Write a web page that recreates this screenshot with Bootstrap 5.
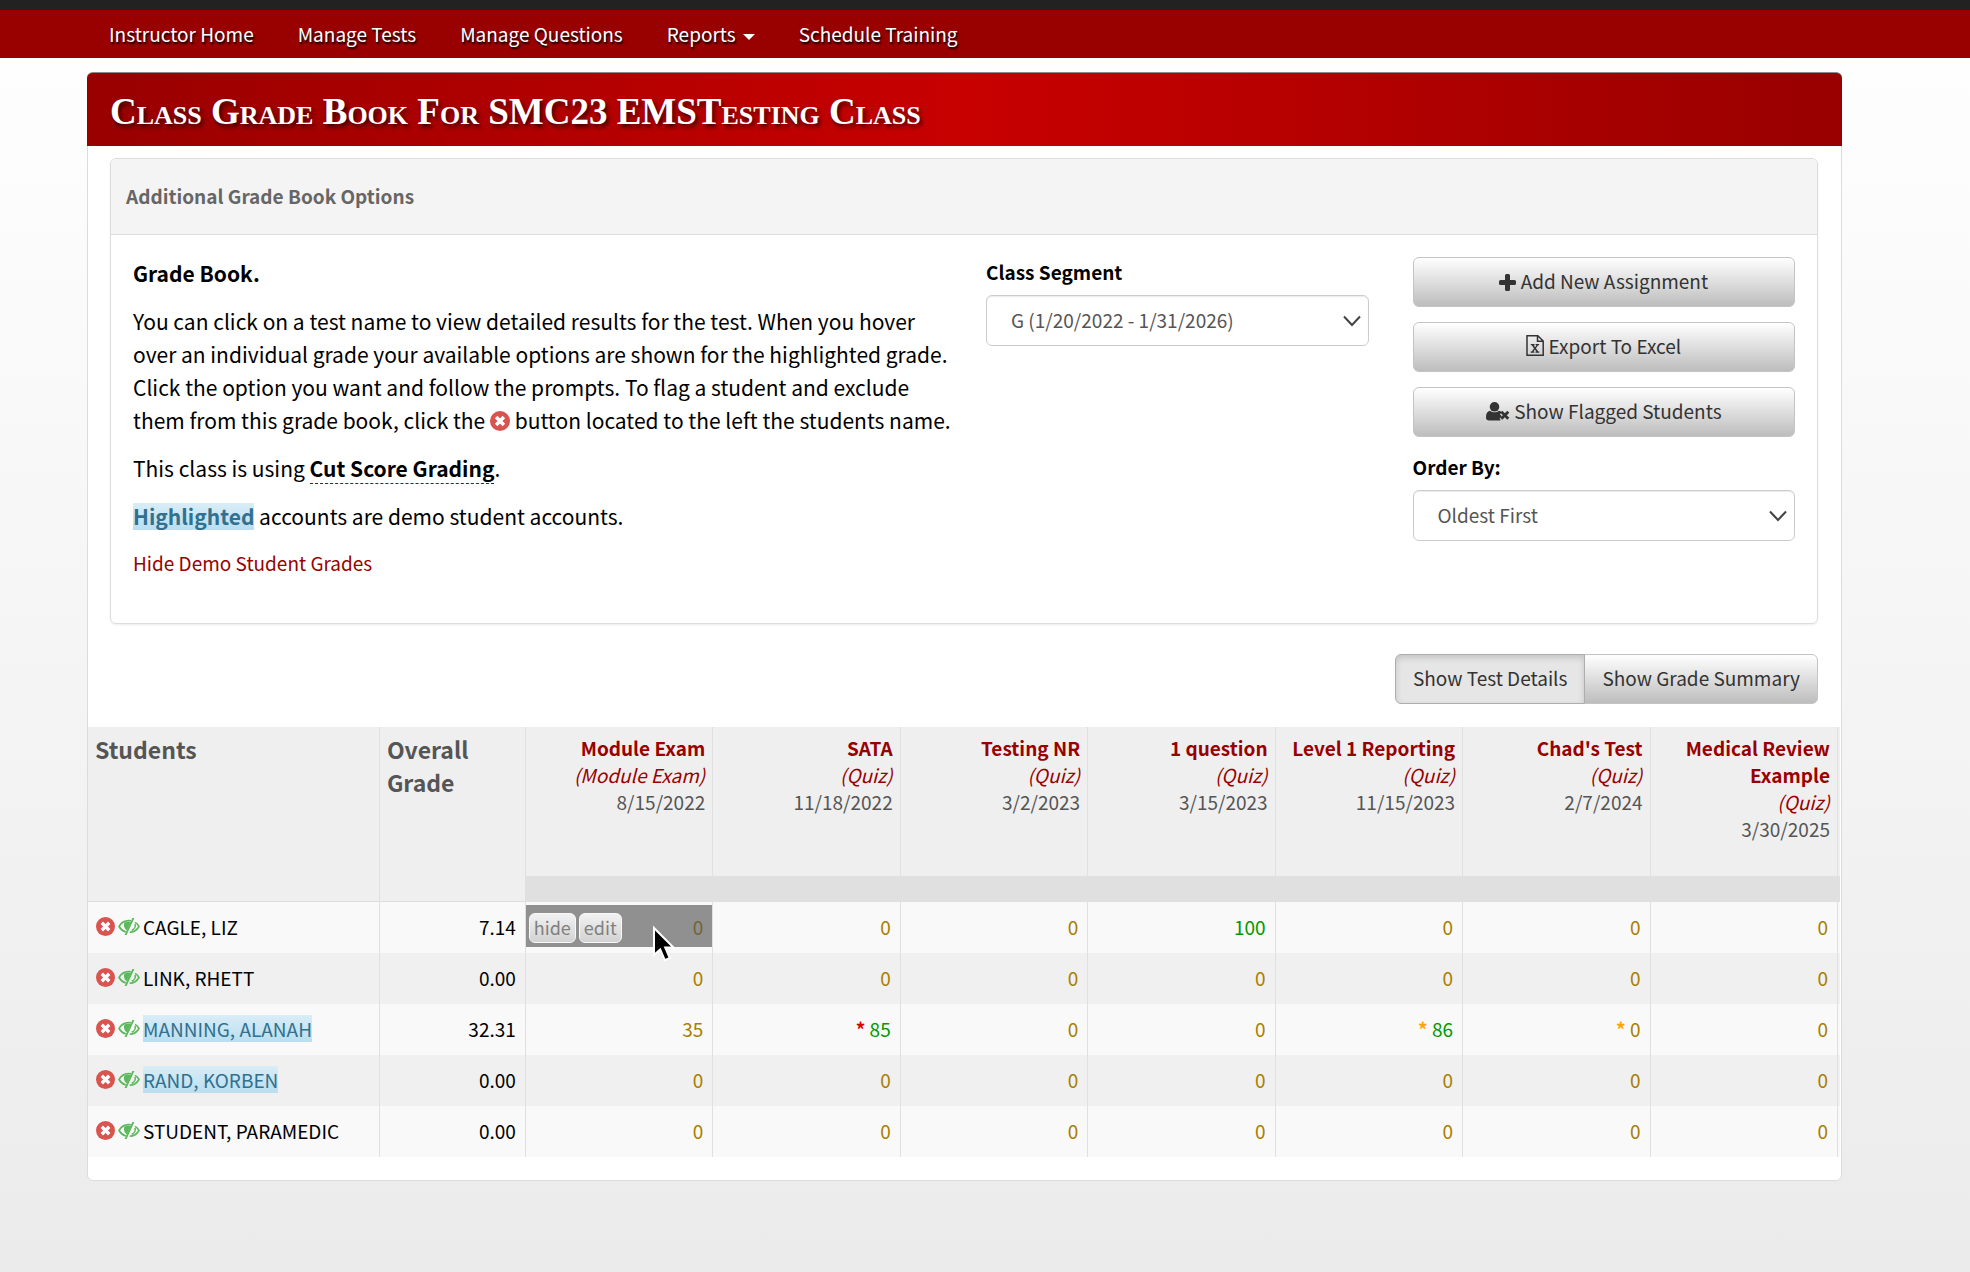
<!DOCTYPE html>
<html lang="en">
<head>
<meta charset="utf-8">
<meta name="viewport" content="width=device-width, initial-scale=1">
<title>Class Grade Book</title>
<link href="https://cdn.jsdelivr.net/npm/bootstrap@5.3.0/dist/css/bootstrap.min.css" rel="stylesheet">
<style>
:root { --gb-red: #900; --gb-line: #dcdcdc; --gb-text: #333; }
body { font: 19px/33px "Noto Sans CJK SC", "Noto Sans", sans-serif; color: #000; min-height: 100vh;
  background: linear-gradient(#fff, #ebebeb) no-repeat; border-top: 10px solid #222; }
a { color: var(--gb-red); text-decoration: none; }
.gb-nav { background: var(--gb-red); padding: 0 128px 0 87px; }
.gb-nav .nav-link { color: #fff; padding: 0 22px; line-height: 47px; padding-bottom: 1px; text-shadow: 1px 2px 2px #000; }
.gb-nav .dropdown-toggle::after { margin-left: 7px; vertical-align: 2px; border-width: 6px 6px 0; }
.gb-panel { margin: 14px 128px 40px 87px; background: #fff; border: 1px solid var(--gb-line); border-radius: 6px; padding-bottom: 23px; }
.gb-title { margin: -1px -1px 0; padding: 4px 23px 0; font: bold 37px/69px "Liberation Serif", serif; font-variant: small-caps;
  color: #fff; text-shadow: 2px 3px 4px rgba(0,0,0,.7); border-top: 1px solid #8a8a8a; border-radius: 6px 6px 0 0;
  background: linear-gradient(90deg, #900, #c80000 50%, #900); }
.gb-well { margin: 12px 23px 30px 22px; border: 1px solid #ddd; border-radius: 6px; box-shadow: 0 1px 2px rgba(0,0,0,.08); }
.gb-well-head { background: #f4f4f4; border-bottom: 1px solid #ddd; border-radius: 6px 6px 0 0; padding: 0 15px 2px;
  line-height: 73px; font-size: 19px; font-weight: bold; color: #666; margin: 0; }
.gb-well-body { padding: 22px 22px 30px; }
.gb-well-body .row { --bs-gutter-x: 44px; }
.gb-well-body p { margin-bottom: 15px; }
.gb-intro { font-size: 21px; }
.gb-intro svg { vertical-align: -2px; }
.gb-intro .gb-aside-link { font-size: 19px; line-height: 30px; }
.gb-tip { font-weight: bold; border-bottom: 1px dashed var(--gb-red); }
.gb-demo { color: #31708f; background: linear-gradient(#d9edf7, #b9def0); display: inline-block; line-height: 27px; }
.gb-label { display: block; font-weight: bold; line-height: 30px; margin-bottom: 8px; }
.form-select.gb-select { height: 51px; font-size: 19px; line-height: 30px; color: #555; padding: 0 40px 1px 24px; border: 1px solid #ccc; border-radius: 6px;
  box-shadow: inset 0 1px 1px rgba(0,0,0,.08);
  background-image: url("data:image/svg+xml,%3Csvg xmlns='http://www.w3.org/2000/svg' viewBox='0 0 18 12'%3E%3Cpath fill='none' stroke='%23444' stroke-width='2' d='M1 1.500l8 8.500 8-8.500'/%3E%3C/svg%3E");
  background-size: 18px 12px; background-position: right 7px center; }
.btn.gb-btn { height: 50px; padding: 0 17px 2px; font-size: 19px; line-height: 46px; color: var(--gb-text); border: 1px solid #c4c4c4; border-radius: 6px;
  background: linear-gradient(#fff, #bdbdbd); }
.gb-btn svg { fill: #333; vertical-align: -2px; }
.gb-actions { gap: 15px; margin-bottom: 15px; }
.btn-group .gb-btn.active { background: #e6e6e6; border-color: #adadad; box-shadow: inset 0 3px 6px rgba(0,0,0,.15); }
.btn-group .gb-btn:first-child { border-radius: 6px 0 0 6px; }
.btn-group .gb-btn:last-child { border-radius: 0 6px 6px 0; }
.gb-tools { margin: 0 23px 23px 22px; }
.gb-grid { width: calc(100% - 1px); table-layout: fixed; border-collapse: separate; border-spacing: 0; }
.gb-grid .w-name { width: 16.66%; }
.gb-grid .w-grade { width: 8.33%; }
.gb-grid .w-edge { width: 2px; }
.gb-grid th, .gb-grid td { border-right: 1px solid #e0e0e0; }
.gb-grid thead th { background: #efefef; vertical-align: top; }
.gb-grid .gb-big { font-size: 23px; line-height: 33px; color: #555; padding: 6px 7px 0; border-bottom: 1px solid #dedede; }
.gb-grid .gb-test { height: 149px; padding: 7px 7px 0 0; font-weight: normal; line-height: 27px; color: #555; text-align: right; }
.gb-test strong, .gb-test em { display: block; }
.gb-grid .gb-strip { height: 26px; padding: 0; background: #e0e0e0; border: 0; }
.gb-grid tbody td, .gb-grid tbody th { height: 51px; padding: 0 9px 2px 8px; font-weight: normal; vertical-align: middle; background: #f0f0f0; }
.gb-grid tbody tr:nth-child(odd) > * { background: #f9f9f9; }
.gb-grid thead .gb-edge, .gb-grid tbody .gb-edge { border-right: 0; padding: 0; }
.gb-grid tbody td { text-align: right; }
.gb-low { color: #a87f00; }
.gb-pass { color: #090; }
.gb-late { color: orange; font-weight: bold; }
.gb-miss { color: #d00; font-weight: bold; }
.gb-ico { border: 0; background: none; padding: 0; margin-right: 3px; display: flex; }
.gb-hover { inset: 3px 0 6px 0; background: rgba(85,85,85,.64); padding: 3px 3px 0; gap: 3px; }
.gb-mini { height: 30px; padding: 0 4px 2px; font-size: 18px; line-height: 26px; color: #808080; border: 1px solid #f8f8f8; border-radius: 6px; background: linear-gradient(#f2f2f2, #d2d2d2); }
.gb-cursor { left: 125px; top: 22px; z-index: 2; }
</style>
<script src="https://cdn.jsdelivr.net/npm/bootstrap@5.3.0/dist/js/bootstrap.bundle.min.js"></script>
</head>
<body>
<svg class="d-none" aria-hidden="true">
  <symbol id="i-remove" viewBox="0 0 18 18"><circle cx="9" cy="9" r="9" fill="#d9534f"/><path d="M5.500 5.500l7 7m0-7l-7 7" stroke="#fff" stroke-width="3.200"/></symbol>
  <symbol id="i-eye" viewBox="0 0 22 17"><g fill="none" stroke="#5cb85c" stroke-width="1.600"><path d="M13 2.800C7 1.800 3 5 1 8.500c1.600 2.800 4 4.600 6.800 5.400M17 4.400c1.700 1 3 2.400 4 4.100-2 3.500-5.300 5.600-9.300 5.800M17 6c.8 2.500-.6 5.300-3.300 6.300"/></g><path d="M14.400 0h2L8.600 17h-2zM6.500 4.500C8 3.600 10.300 3.500 12.500 4L8.700 12.200C6.200 10.800 5.300 7 6.500 4.500z" fill="#5cb85c"/></symbol>
</svg>
<nav class="gb-nav" aria-label="Main">
  <ul class="nav">
    <li class="nav-item"><a class="nav-link" href="#">Instructor Home</a></li>
    <li class="nav-item"><a class="nav-link" href="#">Manage Tests</a></li>
    <li class="nav-item"><a class="nav-link" href="#">Manage Questions</a></li>
    <li class="nav-item dropdown"><a class="nav-link dropdown-toggle" href="#" role="button" data-bs-toggle="dropdown">Reports</a></li>
    <li class="nav-item"><a class="nav-link" href="#">Schedule Training</a></li>
  </ul>
</nav>
<main class="gb-panel">
  <h1 class="gb-title">Class Grade Book For SMC23 EMSTesting Class</h1>
  <section class="gb-well">
    <h2 class="gb-well-head">Additional Grade Book Options</h2>
    <div class="gb-well-body">
      <div class="row">
        <div class="col-6 pe-2 gb-intro">
          <p><strong>Grade Book.</strong></p>
          <p>You can click on a test name to view detailed results for the test. When you hover over an individual grade your available options are shown for the highlighted grade. Click the option you want and follow the prompts. To flag a student and exclude them from this grade book, click the <svg width="20" height="20" aria-hidden="true"><use href="#i-remove"/></svg> button located to the left the students name.</p>
          <p>This class is using <span class="gb-tip">Cut Score Grading</span>.</p>
          <p><strong class="gb-demo">Highlighted</strong> accounts are demo student accounts.</p>
          <p class="gb-aside-link"><a href="#">Hide Demo Student Grades</a></p>
        </div>
        <div class="col-3">
          <label class="gb-label" for="segment">Class Segment</label>
          <select class="form-select gb-select" id="segment"><option>G (1/20/2022 - 1/31/2026)</option></select>
        </div>
        <div class="col-3">
          <div class="d-grid gb-actions">
            <button class="btn gb-btn" type="button"><svg width="17" height="17" viewBox="0 0 17 17"><path d="M7.500 0h2q1.500 0 1.500 1.500V6h4.500Q17 6 17 7.500v2q0 1.500-1.500 1.500H11v4.500q0 1.500-1.500 1.500h-2Q6 17 6 15.500V11H1.500Q0 11 0 9.500v-2Q0 6 1.500 6H6V1.500Q6 0 7.500 0z"/></svg> Add New Assignment</button>
            <button class="btn gb-btn" type="button"><svg width="18" height="21" viewBox="0 0 18 21"><path d="M1 .8h10.800L17.200 6v14.200H1zM11.500 1v5.300H17" fill="none" stroke="#333" stroke-width="1.500"/><path d="M4.800 9h3.800v1.200H7.800l1.300 2 1.300-2h-.8V9h3.500v1.200h-1l-2.200 3 2.400 3.400h1V17.800H9.500v-1.200h.8l-1.400-2.200-1.400 2.200h.8v1.200H4.700v-1.200h1l2.300-3.200-2.200-3.200h-1z"/></svg> Export To Excel</button>
            <button class="btn gb-btn" type="button"><svg width="24" height="19" viewBox="0 0 24 19"><circle cx="8.500" cy="4.800" r="4.800"/><path d="M4 8.800c2.700 2 6.300 2 9 0 1.200.2 2 .8 2.600 1.700l-1.700 1.700 2 2-2.400 2.500 1.300 1.300q-.7.500-1.600.5H3.200Q0 18.500 0 15.200 0 9.500 4 8.800z"/><path d="M15.300 9.800l7 7m0-7l-7 7" stroke="#333" stroke-width="2.800"/></svg> Show Flagged Students</button>
          </div>
          <label class="gb-label" for="order">Order By:</label>
          <select class="form-select gb-select" id="order"><option>Oldest First</option></select>
        </div>
      </div>
    </div>
  </section>
  <div class="gb-tools d-flex justify-content-end">
    <div class="btn-group" role="group" aria-label="View">
      <button class="btn gb-btn active" type="button">Show Test Details</button>
      <button class="btn gb-btn" type="button">Show Grade Summary</button>
    </div>
  </div>
  <table class="gb-grid">
    <colgroup><col class="w-name"><col class="w-grade"><col span="7"><col class="w-edge"></colgroup>
    <thead>
      <tr>
        <th class="gb-big" rowspan="2" scope="col">Students</th>
        <th class="gb-big" rowspan="2" scope="col">Overall Grade</th>
        <th class="gb-test" scope="col"><a href="#"><strong>Module Exam</strong><em>(Module Exam)</em></a>8/15/2022</th>
        <th class="gb-test" scope="col"><a href="#"><strong>SATA</strong><em>(Quiz)</em></a>11/18/2022</th>
        <th class="gb-test" scope="col"><a href="#"><strong>Testing NR</strong><em>(Quiz)</em></a>3/2/2023</th>
        <th class="gb-test" scope="col"><a href="#"><strong>1 question</strong><em>(Quiz)</em></a>3/15/2023</th>
        <th class="gb-test" scope="col"><a href="#"><strong>Level 1 Reporting</strong><em>(Quiz)</em></a>11/15/2023</th>
        <th class="gb-test" scope="col"><a href="#"><strong>Chad's Test</strong><em>(Quiz)</em></a>2/7/2024</th>
        <th class="gb-test" scope="col"><a href="#"><strong>Medical Review Example</strong><em>(Quiz)</em></a>3/30/2025</th>
        <th class="gb-edge"></th>
      </tr>
      <tr><td class="gb-strip" colspan="8"></td></tr>
    </thead>
    <tbody>
      <tr>
        <th scope="row"><div class="d-flex align-items-center"><button class="gb-ico" type="button" aria-label="Flag"><svg width="19" height="19"><use href="#i-remove"/></svg></button><button class="gb-ico" type="button" aria-label="Hide"><svg width="22" height="17"><use href="#i-eye"/></svg></button><span>CAGLE, LIZ</span></div></th>
        <td>7.14</td>
        <td class="gb-low position-relative">0
          <div class="gb-hover position-absolute d-flex align-items-center"><button class="gb-mini" type="button">hide</button><button class="gb-mini" type="button">edit</button></div>
          <svg class="gb-cursor position-absolute" width="28" height="42" viewBox="0 0 28 42" aria-hidden="true"><path d="M3 4v27l6.200-5.600 4.600 10.800 5-2.200-4.600-10.500h8.300z" fill="#000" stroke="#fff" stroke-width="2"/></svg>
        </td>
        <td class="gb-low">0</td><td class="gb-low">0</td><td class="gb-pass">100</td><td class="gb-low">0</td><td class="gb-low">0</td><td class="gb-low">0</td><td class="gb-edge"></td>
      </tr>
      <tr>
        <th scope="row"><div class="d-flex align-items-center"><button class="gb-ico" type="button" aria-label="Flag"><svg width="19" height="19"><use href="#i-remove"/></svg></button><button class="gb-ico" type="button" aria-label="Hide"><svg width="22" height="17"><use href="#i-eye"/></svg></button><span>LINK, RHETT</span></div></th>
        <td>0.00</td>
        <td class="gb-low">0</td><td class="gb-low">0</td><td class="gb-low">0</td><td class="gb-low">0</td><td class="gb-low">0</td><td class="gb-low">0</td><td class="gb-low">0</td><td class="gb-edge"></td>
      </tr>
      <tr>
        <th scope="row"><div class="d-flex align-items-center"><button class="gb-ico" type="button" aria-label="Flag"><svg width="19" height="19"><use href="#i-remove"/></svg></button><button class="gb-ico" type="button" aria-label="Hide"><svg width="22" height="17"><use href="#i-eye"/></svg></button><span class="gb-demo">MANNING, ALANAH</span></div></th>
        <td>32.31</td>
        <td class="gb-low">35</td><td class="gb-pass"><span class="gb-miss">*</span> 85</td><td class="gb-low">0</td><td class="gb-low">0</td><td class="gb-pass"><span class="gb-late">*</span> 86</td><td class="gb-low"><span class="gb-late">*</span> 0</td><td class="gb-low">0</td><td class="gb-edge"></td>
      </tr>
      <tr>
        <th scope="row"><div class="d-flex align-items-center"><button class="gb-ico" type="button" aria-label="Flag"><svg width="19" height="19"><use href="#i-remove"/></svg></button><button class="gb-ico" type="button" aria-label="Hide"><svg width="22" height="17"><use href="#i-eye"/></svg></button><span class="gb-demo">RAND, KORBEN</span></div></th>
        <td>0.00</td>
        <td class="gb-low">0</td><td class="gb-low">0</td><td class="gb-low">0</td><td class="gb-low">0</td><td class="gb-low">0</td><td class="gb-low">0</td><td class="gb-low">0</td><td class="gb-edge"></td>
      </tr>
      <tr>
        <th scope="row"><div class="d-flex align-items-center"><button class="gb-ico" type="button" aria-label="Flag"><svg width="19" height="19"><use href="#i-remove"/></svg></button><button class="gb-ico" type="button" aria-label="Hide"><svg width="22" height="17"><use href="#i-eye"/></svg></button><span>STUDENT, PARAMEDIC</span></div></th>
        <td>0.00</td>
        <td class="gb-low">0</td><td class="gb-low">0</td><td class="gb-low">0</td><td class="gb-low">0</td><td class="gb-low">0</td><td class="gb-low">0</td><td class="gb-low">0</td><td class="gb-edge"></td>
      </tr>
    </tbody>
  </table>
</main>
</body>
</html>
